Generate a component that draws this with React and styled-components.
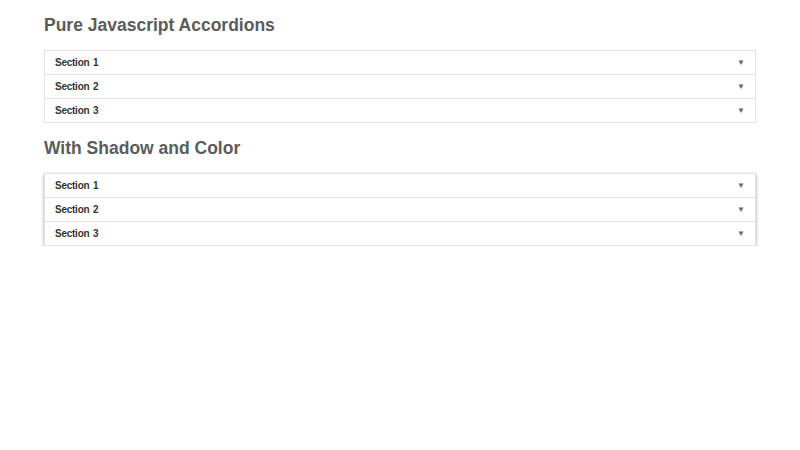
import React from 'react';
import styled, { createGlobalStyle } from 'styled-components';

const GlobalStyle = createGlobalStyle`
  body {
    margin: 0;
    background: #fff;
    font-family: "Liberation Sans", Arial, sans-serif;
  }
`;

const Page = styled.div`
  padding: 0 44px;
`;

const Title = styled.h2`
  margin: 0;
  height: 50px;
  display: flex;
  align-items: center;
  font-size: 17.5px;
  font-weight: bold;
  color: #5b5b5b;
`;

const Accordion = styled.div`
  border: 1px solid #e3e3e3;
  background: #fff;
  box-shadow: ${(p) =>
    p.$shadow ? '0 2px 3px rgba(0,0,0,0.32), 0 0 2px rgba(0,0,0,0.1)' : 'none'};
`;

const Row = styled.div`
  display: flex;
  align-items: center;
  justify-content: space-between;
  height: 23px;
  padding: 0 10px 1px;
  box-sizing: border-box;
  font-size: 10px;
  letter-spacing: -0.25px;
  word-spacing: 1px;
  font-weight: bold;
  color: #333;
  & + & {
    border-top: 1px solid #e3e3e3;
    height: 24px;
  }
`;

const Arrow = styled.span`
  font-size: 8px;
  letter-spacing: 0;
  color: #666;
`;

const sections = ['Section 1', 'Section 2', 'Section 3'];

const Group = ({ title, shadow }) => (
  <>
    <Title>{title}</Title>
    <Accordion $shadow={shadow}>
      {sections.map((s) => (
        <Row key={s}>
          {s}
          <Arrow>▼</Arrow>
        </Row>
      ))}
    </Accordion>
  </>
);

export default function App() {
  return (
    <>
      <GlobalStyle />
      <Page>
        <Group title="Pure Javascript Accordions" />
        <Group title="With Shadow and Color" shadow />
      </Page>
    </>
  );
}
